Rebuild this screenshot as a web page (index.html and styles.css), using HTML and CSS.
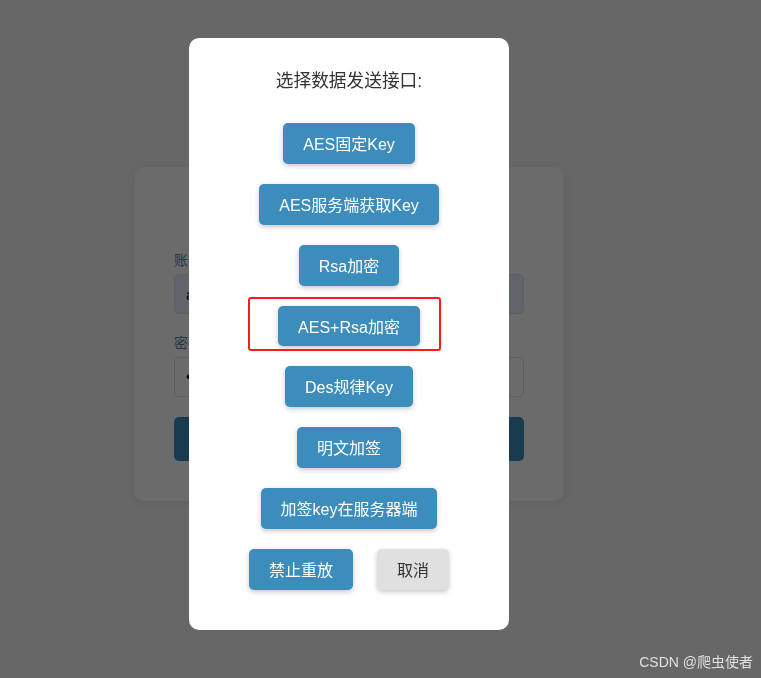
FILE: index.html
```html
<!DOCTYPE html>
<html lang="zh-CN">
<head>
<meta charset="utf-8">
<title>选择数据发送接口</title>
<link rel="stylesheet" href="styles.css">
</head>
<body>
<div class="page">
  <div class="card">
    <div class="card-title"></div>
    <label class="field-label">账号</label>
    <div class="input autofill">admin</div>
    <label class="field-label second">密码</label>
    <div class="input dots">••••••</div>
    <button class="login-btn" aria-label="登录"></button>
  </div>
</div>

<div class="overlay">
  <div class="overlay-inner">
    <div class="modal">
      <div class="modal-title">选择数据发送接口:</div>
      <button class="btn">AES固定Key</button>
      <button class="btn">AES服务端获取Key</button>
      <button class="btn">Rsa加密</button>
      <button class="btn">AES+Rsa加密</button>
      <button class="btn">Des规律Key</button>
      <button class="btn">明文加签</button>
      <button class="btn">加签key在服务器端</button>
      <div class="row">
        <button class="btn">禁止重放</button>
        <button class="btn cancel">取消</button>
      </div>
      <div class="highlight"></div>
    </div>
  </div>
  <div class="watermark">CSDN @爬虫使者</div>
</div>
</body>
</html>
```

FILE: styles.css
```css
* { box-sizing: border-box; }
html, body {
  margin: 0;
  padding: 0;
  background: #f5f5f5;
  font-family: "Liberation Sans", "Noto Sans CJK SC", sans-serif;
  height: 100%;
  overflow: hidden;
}
.page {
  width: 698px;
  padding-top: 167px;
  display: flex;
  justify-content: center;
}
.card {
  width: 430px;
  height: 334px;
  background: #fff;
  border-radius: 10px;
  padding: 40px 40px;
  display: flex;
  flex-direction: column;
  box-shadow: 0 2px 8px rgba(0,0,0,0.08);
}
.card-title {
  height: 45px;
}
.field-label {
  font-size: 14px;
  line-height: 16px;
  color: #5b87ad;
  margin-bottom: 6px;
}
.field-label.second { margin-top: 21px; }
.input {
  height: 40px;
  border: 1px solid #dcdfe6;
  border-radius: 5px;
  padding: 0 11px;
  display: flex;
  align-items: center;
  font-size: 15px;
  color: #000;
}
.input.autofill { background: #e8f0fe; }
.input.dots { font-size: 16px; letter-spacing: 1px; }
.login-btn {
  margin-top: 20px;
  height: 44px;
  border: none;
  border-radius: 5px;
  background: #3c8dbc;
}
.overlay {
  position: fixed;
  inset: 0;
  background: rgba(0,0,0,0.58);
}
.overlay-inner {
  width: 698px;
  padding-top: 38px;
  display: flex;
  justify-content: center;
}
.modal {
  position: relative;
  width: 320px;
  height: 592px;
  background: #fff;
  border-radius: 10px;
  padding: 31px 0 40px;
  display: flex;
  flex-direction: column;
  align-items: center;
  gap: 20px;
}
.modal-title {
  font-size: 17.7px;
  line-height: 24px;
  color: #333;
  margin-bottom: 10px;
}
.btn {
  height: 41px;
  padding: 0 20px 1px;
  border: none;
  border-radius: 5px;
  background: #3c8dbc;
  color: #fff;
  font-size: 16px;
  font-family: "Liberation Sans", "Noto Sans CJK SC", sans-serif;
  box-shadow: 0 2px 5px rgba(0,0,0,0.22);
  cursor: pointer;
}
.btn.cancel {
  background: #e0e0e0;
  color: #333;
}
.row {
  display: flex;
  gap: 24px;
}
.highlight {
  position: absolute;
  left: 59px;
  top: 259px;
  width: 193px;
  height: 54px;
  border: 2px solid #ff1a1a;
  border-radius: 3px;
}
.watermark {
  position: absolute;
  right: 8px;
  bottom: 7px;
  font-size: 14px;
  color: #e6e6e6;
  text-shadow: 0 0 1px rgba(0,0,0,0.3);
}
```
